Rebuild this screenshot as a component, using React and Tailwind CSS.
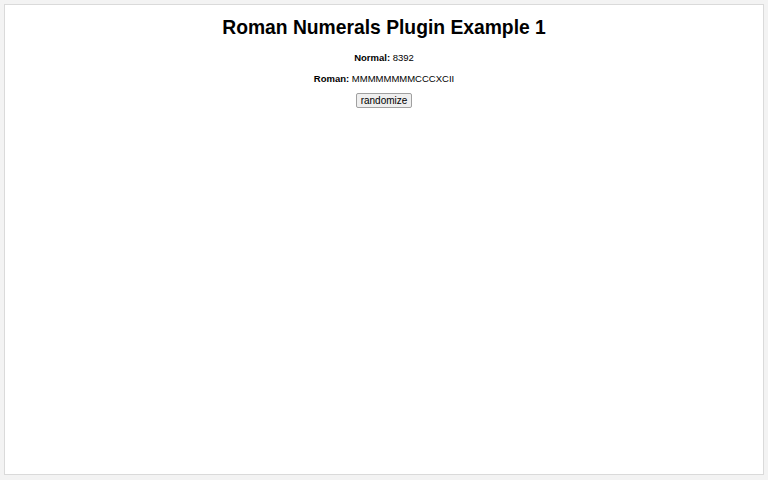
import React, { useState } from 'react';

function toRoman(n) {
  const table = [
    [1000, 'M'], [900, 'CM'], [500, 'D'], [400, 'CD'],
    [100, 'C'], [90, 'XC'], [50, 'L'], [40, 'XL'],
    [10, 'X'], [9, 'IX'], [5, 'V'], [4, 'IV'], [1, 'I'],
  ];
  let out = '';
  for (const [v, s] of table) {
    while (n >= v) {
      out += s;
      n -= v;
    }
  }
  return out;
}

export default function App() {
  const [num, setNum] = useState(8392);

  return (
    <div className="h-[480px] bg-[#f3f3f3] p-[4px] font-['Liberation_Sans',Arial,sans-serif] text-black">
      <div className="h-[471px] border border-[#dadada] bg-white pt-[11px] text-center">
        <h1 className="text-[19.3px] font-bold leading-[23px]">Roman Numerals Plugin Example 1</h1>
        <p className="mt-[12px] text-[9.5px] leading-[13px]">
          <b>Normal:</b> {num}
        </p>
        <p className="mt-[8px] text-[9.5px] leading-[13px]">
          <b>Roman:</b> {toRoman(num)}
        </p>
        <div className="mt-[8px] flex justify-center">
          <button
            onClick={() => setNum(Math.floor(Math.random() * 9999) + 1)}
            className="h-[15px] border border-[#a0a0a0] bg-[#efefef] px-[4px] text-[10px] leading-[12px] rounded-[2px]"
          >
            randomize
          </button>
        </div>
      </div>
    </div>
  );
}
